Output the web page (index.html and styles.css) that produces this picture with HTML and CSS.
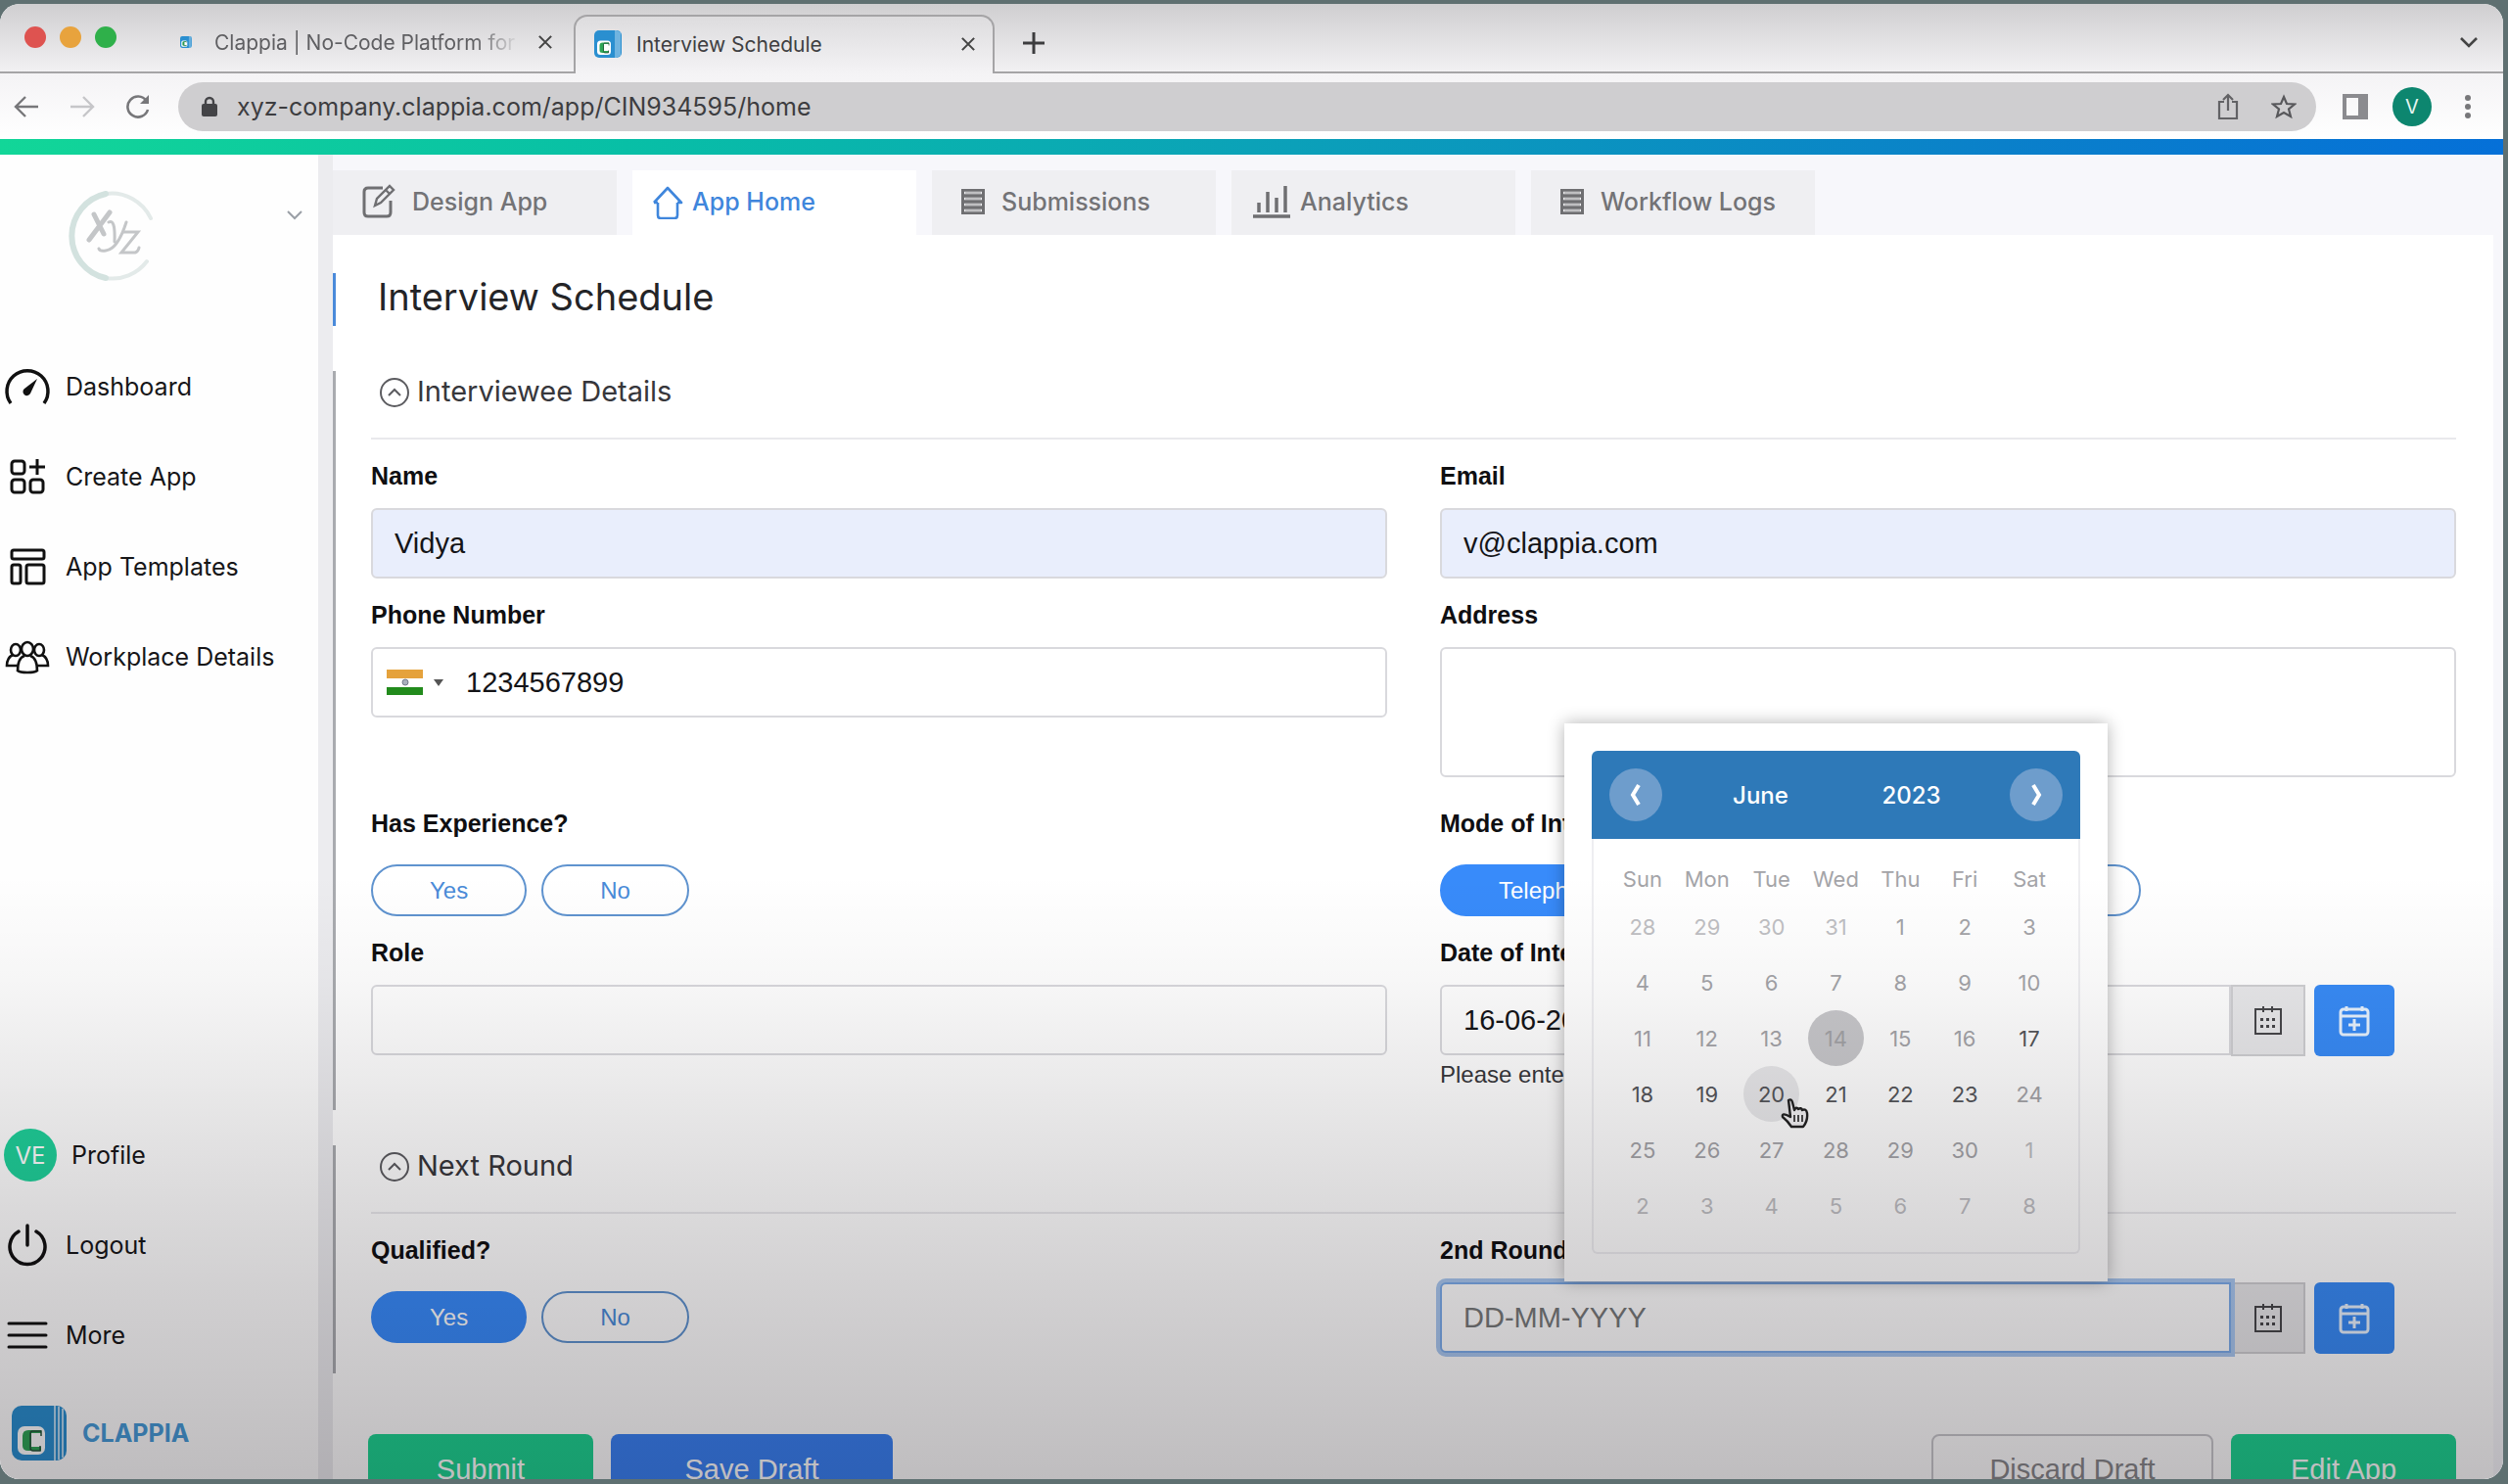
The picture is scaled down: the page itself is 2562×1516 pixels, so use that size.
FILE: index.html
```html
<!DOCTYPE html>
<html lang="en">
<head>
<meta charset="utf-8">
<title>Interview Schedule</title>
<link rel="stylesheet" href="styles.css">
</head>
<body>
<svg class="sprite" aria-hidden="true">
  <symbol id="clappia" viewBox="0 0 56 56">
    <rect x="0" y="0" width="56" height="56" rx="10" fill="#2a8fd0"/>
    <path d="M44 0v56M48 1v54M52 3v50" stroke="#e4f1fa" stroke-width="1.5"/>
    <rect x="6" y="21" width="28" height="29" rx="7" fill="#fff"/>
    <path d="M30 28V25H17Q11 25 11 31V41Q11 46 17 46H30V42H20V28Z" fill="#2fa556"/>
    <path d="M30 31V26H21Q19 26 19 29V43Q19 46 22 46H29V41" fill="none" stroke="#24543a" stroke-width="1.5"/>
  </symbol>
  <symbol id="close" viewBox="0 0 16 16"><path d="M1 1 15 15M15 1 1 15" stroke="currentColor" stroke-width="2.4" fill="none"/></symbol>
  <symbol id="list" viewBox="0 0 24 26">
    <rect width="24" height="26" fill="#6f6f72"/>
    <path d="M3 4H21M3 10H21M3 16H21M3 22H21" stroke="#efeff2" stroke-width="2.4"/>
    <path d="M4 4H20M4 10H20M4 16H20M4 22H20" stroke="#8e8e90" stroke-width="1"/>
  </symbol>
  <symbol id="collapse" viewBox="0 0 32 32"><g fill="none" stroke="#5c5c60" stroke-width="2"><circle cx="16" cy="17" r="14"/><path d="M10 20 16 14 22 20"/></g></symbol>
  <symbol id="calendar" viewBox="0 0 32 32">
    <path d="M3 4H29V29H3ZM11 1V7M20 1V7" fill="none" stroke="#47474a" stroke-width="2"/>
    <path d="M8 13h3v3H8zM14 13h3v3h-3zM20 13h3v3h-3zM8 20h3v3H8zM14 20h3v3h-3zM20 20h3v3h-3z" fill="#47474a"/>
  </symbol>
  <symbol id="calendar-add" viewBox="0 0 32 32">
    <g fill="none" stroke="#e8f3ff" stroke-width="3"><rect x="2" y="4" width="28" height="26" rx="3"/><path d="M2 11H30M8 1V6M24 1V6M16 14V26M10 20H22"/></g>
  </symbol>
</svg>

<div class="window">
  <header class="tabstrip">
    <div class="lights"><i class="light red"></i><i class="light amber"></i><i class="light green"></i></div>
    <div class="browser-tab">
      <svg class="favicon-small"><use href="#clappia"/></svg>
      <span class="tab-title faded">Clappia | No-Code Platform for</span>
      <button class="icon-button" aria-label="Close tab"><svg class="x"><use href="#close"/></svg></button>
    </div>
    <div class="browser-tab current">
      <svg class="favicon"><use href="#clappia"/></svg>
      <span class="tab-title">Interview Schedule</span>
      <button class="icon-button" aria-label="Close tab"><svg class="x"><use href="#close"/></svg></button>
    </div>
    <button class="icon-button new-tab" aria-label="New tab"><svg width="24" height="24" viewBox="0 0 24 24"><path d="M12 1V23M1 12H23" stroke="#3c3c3e" stroke-width="3"/></svg></button>
    <button class="icon-button tab-menu" aria-label="Search tabs"><svg width="18" height="12" viewBox="0 0 18 12"><path d="M1 2 9 10 17 2" fill="none" stroke="#444" stroke-width="2.6"/></svg></button>
  </header>

  <div class="toolbar">
    <button class="icon-button" aria-label="Back"><svg width="26" height="24" viewBox="0 0 26 24"><path d="M25 12H3M12 2 2 12 12 22" fill="none" stroke="#77777a" stroke-width="2.4"/></svg></button>
    <button class="icon-button" aria-label="Forward"><svg width="26" height="24" viewBox="0 0 26 24"><path d="M1 12H23M14 2 24 12 14 22" fill="none" stroke="#c6c6c9" stroke-width="2.4"/></svg></button>
    <button class="icon-button" aria-label="Reload"><svg width="26" height="26" viewBox="0 0 26 26"><path d="M23 16A10.500 10.500 0 1 1 21.500 7" fill="none" stroke="#77777a" stroke-width="2.6"/><path d="M24 1V10H15Z" fill="#77777a"/></svg></button>
    <div class="address">
      <svg width="16" height="22" viewBox="0 0 16 22"><rect y="8" width="16" height="13" rx="2" fill="#444447"/><path d="M4 9V6A4 4 0 0 1 12 6V9" fill="none" stroke="#444447" stroke-width="2.4"/></svg>
      <input class="url" aria-label="Address" value="xyz-company.clappia.com/app/CIN934595/home">
      <button class="icon-button" aria-label="Share"><svg width="22" height="28" viewBox="0 0 22 28"><path d="M7 9H2V26H20V9H15M11 18V3M6 7 11 2 16 7" fill="none" stroke="#626265" stroke-width="2.2"/></svg></button>
      <button class="icon-button" aria-label="Bookmark"><svg width="26" height="26" viewBox="0 0 26 26"><path d="M13 3 16 10 24 10.500 18 15.500 20 23 13 19 6 23 8 15.500 2 10.500 10 10Z" fill="none" stroke="#58585b" stroke-width="2.2"/></svg></button>
    </div>
    <button class="icon-button" aria-label="Side panel"><svg width="26" height="26" viewBox="0 0 26 26"><path d="M0 0H26V26H0ZM4 4V22H16V4Z" fill="#8b8b8f" fill-rule="evenodd"/></svg></button>
    <button class="user-badge" aria-label="Account">V</button>
    <button class="icon-button" aria-label="Menu"><svg width="6" height="26" viewBox="0 0 6 26"><g fill="#77777a"><circle cx="3" cy="4" r="3"/><circle cx="3" cy="13" r="3"/><circle cx="3" cy="22" r="3"/></g></svg></button>
  </div>

  <div class="brand-line"></div>

  <div class="app">
    <aside class="sidebar">
      <div class="workspace">
        <svg class="workspace-logo" viewBox="0 0 100 96">
          <path d="M86 30A44 44 0 0 0 40 5M40 91A44 44 0 0 0 82 74" fill="none" stroke="#e3eae9" stroke-width="4" stroke-linecap="round"/>
          <path d="M40 5A44 44 0 0 0 40 91" fill="none" stroke="#d3e2df" stroke-width="6" stroke-linecap="round"/>
          <g fill="none" stroke="#c4c6c8" stroke-linecap="round"><path d="M28 26 38 46M44 24 23 52" stroke-width="5"/><path d="M43 34Q50 30 49 54M61 34Q52 62 40 63 34 64 33 61" stroke-width="3"/><path d="M58 44H73L56 65H70Q73 64 74 60" stroke-width="3"/></g>
        </svg>
        <button class="icon-button" aria-label="Switch workspace"><svg width="16" height="10" viewBox="0 0 16 10"><path d="M1 1 8 8 15 1" fill="none" stroke="#9a9fa6" stroke-width="2"/></svg></button>
      </div>
      <nav class="menu">
        <a href="#" class="menu-item">
          <svg viewBox="0 0 48 48"><path d="M7 41A21 21 0 1 1 41 41" fill="none" stroke="#111" stroke-width="3.500"/><path d="M34 16 27 31A4 4 0 1 1 21 26Z" fill="#111"/></svg>
          Dashboard</a>
        <a href="#" class="menu-item">
          <svg viewBox="0 0 48 48"><g fill="none" stroke="#111" stroke-width="3"><rect x="8" y="8" width="13" height="13" rx="3"/><rect x="8" y="27" width="13" height="13" rx="3"/><rect x="27" y="27" width="13" height="13" rx="3"/><path d="M34 6V22M26 14H42"/></g></svg>
          Create App</a>
        <a href="#" class="menu-item">
          <svg viewBox="0 0 48 48"><g fill="none" stroke="#111" stroke-width="3"><rect x="8" y="7" width="33" height="9" rx="2"/><rect x="8" y="22" width="9" height="19" rx="2"/><rect x="23" y="22" width="18" height="19" rx="2"/></g></svg>
          App Templates</a>
        <a href="#" class="menu-item">
          <svg viewBox="0 0 48 48"><g fill="none" stroke="#111" stroke-width="2.600"><ellipse cx="24" cy="16" rx="6" ry="7"/><path d="M14 39Q14 25 21 23M34 39Q34 25 27 23M14 38Q16 40 24 40 32 40 34 38"/><ellipse cx="12" cy="17" rx="5" ry="6"/><ellipse cx="36" cy="17" rx="5" ry="6"/><path d="M9 22Q3 25 3 33H14M39 22Q45 25 45 33H34"/></g></svg>
          Workplace Details</a>
      </nav>
      <nav class="menu account">
        <a href="#" class="menu-item profile"><span class="initials">VE</span>Profile</a>
        <a href="#" class="menu-item">
          <svg viewBox="0 0 48 48"><path d="M15 10A18 18 0 1 0 33 10M24 4V24" fill="none" stroke="#111" stroke-width="3.500" stroke-linecap="round"/></svg>
          Logout</a>
        <a href="#" class="menu-item">
          <svg viewBox="0 0 48 48"><path d="M5 12H43M5 24H43M5 36H43" stroke="#111" stroke-width="3" stroke-linecap="round"/></svg>
          More</a>
      </nav>
      <a href="#" class="product"><svg width="56" height="56"><use href="#clappia"/></svg>CLAPPIA</a>
    </aside>

    <main class="main">
      <nav class="app-tabs">
        <a href="#" class="app-tab spaced"><svg width="34" height="36" viewBox="0 0 34 36"><path d="M21 4H6Q2 4 2 8V29Q2 33 6 33H25Q29 33 29 29V17" fill="none" stroke="#6f6f72" stroke-width="3"/><path d="M13 22 15 15 28 2 32 6 19 19ZM24 6 28 10" fill="none" stroke="#6f6f72" stroke-width="2.400"/></svg>Design App</a>
        <a href="#" class="app-tab selected"><svg width="32" height="36" viewBox="0 0 32 36"><path d="M2 19 16 4 30 19H26M6 19H2M6 19V32Q6 35 9 35H23Q26 35 26 32V19" fill="none" stroke="#3f86dc" stroke-width="2.600" stroke-linejoin="round"/></svg>App Home</a>
        <a href="#" class="app-tab spaced"><svg width="24" height="26"><use href="#list"/></svg>Submissions</a>
        <a href="#" class="app-tab"><svg width="38" height="34" viewBox="0 0 38 34"><path d="M0 32H38M6 28V18M15 28V7M24 28V13M33 28V1" stroke="#6f6f72" stroke-width="3.500"/></svg>Analytics</a>
        <a href="#" class="app-tab spaced"><svg width="24" height="26"><use href="#list"/></svg>Workflow Logs</a>
      </nav>

      <form class="sheet">
        <h1 class="sheet-title">Interview Schedule</h1>

        <section class="section">
          <h2 class="section-title"><svg><use href="#collapse"/></svg>Interviewee Details</h2>
          <div class="fields">
            <div class="field">
              <label for="name">Name</label>
              <input class="box filled" id="name" value="Vidya">
            </div>
            <div class="field">
              <label for="email">Email</label>
              <input class="box filled" id="email" value="v@clappia.com">
            </div>
            <div class="field">
              <label for="phone">Phone Number</label>
              <div class="box phone">
                <button type="button" class="country" aria-label="Country: India">
                  <svg width="37" height="26" viewBox="0 0 37 26"><path fill="#e5a23c" d="M0 0h37v9H0z"/><path fill="#fff" d="M0 9h37v9H0z"/><path fill="#228b1c" d="M0 18h37v8H0z"/><circle cx="19" cy="13" r="3" fill="#a9b0bd" stroke="#73798a"/></svg>
                  <svg width="10" height="7" viewBox="0 0 10 7"><path d="M0 0H10L5 7Z" fill="#555"/></svg>
                </button>
                <input class="bare" id="phone" type="tel" value="1234567899">
              </div>
            </div>
            <div class="field">
              <label for="address">Address</label>
              <textarea class="box tall" id="address"></textarea>
            </div>
            <div class="field">
              <span class="label">Has Experience?</span>
              <div class="choices">
                <button type="button" class="pill">Yes</button>
                <button type="button" class="pill">No</button>
              </div>
            </div>
            <div class="field">
              <span class="label">Mode of Interview</span>
              <div class="choices">
                <button type="button" class="pill on">Telephonic</button>
                <button type="button" class="pill">In Person</button>
                <button type="button" class="pill">Video Call</button>
              </div>
            </div>
            <div class="field">
              <label for="role">Role</label>
              <input class="box" id="role">
            </div>
            <div class="field">
              <label for="date1">Date of Interview</label>
              <div class="date">
                <input class="box" id="date1" value="16-06-2023">
                <button type="button" class="addon" aria-label="Open calendar"><svg width="32" height="32"><use href="#calendar"/></svg></button>
                <button type="button" class="add-event" aria-label="Add to calendar"><svg width="32" height="32"><use href="#calendar-add"/></svg></button>
              </div>
              <p class="hint">Please enter the date</p>
            </div>
          </div>
        </section>

        <section class="section">
          <h2 class="section-title"><svg><use href="#collapse"/></svg>Next Round</h2>
          <div class="fields">
            <div class="field">
              <span class="label">Qualified?</span>
              <div class="choices">
                <button type="button" class="pill on">Yes</button>
                <button type="button" class="pill">No</button>
              </div>
            </div>
            <div class="field">
              <label for="date2">2nd Round Date</label>
              <div class="date">
                <input class="box focused" id="date2" placeholder="DD-MM-YYYY">
                <button type="button" class="addon" aria-label="Open calendar"><svg width="32" height="32"><use href="#calendar"/></svg></button>
                <button type="button" class="add-event" aria-label="Add to calendar"><svg width="32" height="32"><use href="#calendar-add"/></svg></button>

                <div class="picker">
                  <div class="picker-head">
                    <button type="button" class="step" aria-label="Previous month"><svg width="14" height="26" viewBox="0 0 14 26"><path d="M10 3 4 13 10 23" fill="none" stroke="#fff" stroke-width="4"/></svg></button>
                    <button type="button" class="period">June</button>
                    <button type="button" class="period">2023</button>
                    <button type="button" class="step next" aria-label="Next month"><svg width="14" height="26" viewBox="0 0 14 26"><path d="M4 3 10 13 4 23" fill="none" stroke="#fff" stroke-width="4"/></svg></button>
                  </div>
                  <div class="picker-body">
                    <table class="days">
                      <thead><tr><th>Sun</th><th>Mon</th><th>Tue</th><th>Wed</th><th>Thu</th><th>Fri</th><th>Sat</th></tr></thead>
                      <tbody>
                        <tr><td class="out">28</td><td class="out">29</td><td class="out">30</td><td class="out">31</td><td>1</td><td>2</td><td>3</td></tr>
                        <tr><td>4</td><td>5</td><td>6</td><td>7</td><td>8</td><td>9</td><td>10</td></tr>
                        <tr><td>11</td><td>12</td><td>13</td><td><span class="day today">14</span></td><td>15</td><td>16</td><td><button type="button" class="day">17</button></td></tr>
                        <tr><td><button type="button" class="day">18</button></td><td><button type="button" class="day">19</button></td><td class="pointed"><button type="button" class="day hover">20</button><svg class="cursor" viewBox="0 0 30 32"><path d="M9 3Q12 1 13 5L15 13Q17 9 19 12 22 10 23 13 27 11 28 16 29 24 24 30H12Q8 24 3 20 2 16 7 18L11 20Z" fill="#f4f3f5" stroke="#222" stroke-width="2.400" stroke-linejoin="round"/><path d="M15 18V25M19 18V25M23 18V25" stroke="#222" stroke-width="1.600"/></svg></td><td><button type="button" class="day">21</button></td><td><button type="button" class="day">22</button></td><td><button type="button" class="day">23</button></td><td>24</td></tr>
                        <tr><td>25</td><td>26</td><td>27</td><td>28</td><td>29</td><td>30</td><td class="out">1</td></tr>
                        <tr><td class="out">2</td><td class="out">3</td><td class="out">4</td><td class="out">5</td><td class="out">6</td><td class="out">7</td><td class="out">8</td></tr>
                      </tbody>
                    </table>
                  </div>
                </div>
              </div>
            </div>
          </div>
        </section>

        <div class="actions">
          <button type="button" class="action success">Submit</button>
          <button type="button" class="action primary">Save Draft</button>
          <button type="button" class="action plain">Discard Draft</button>
          <button type="button" class="action success">Edit App</button>
        </div>
      </form>
    </main>
  </div>
</div>
</body>
</html>
```
FILE: styles.css
```css
* { box-sizing: border-box; }

html, body { height: 100%; margin: 0; }

body {
  padding: 4px 5px 5px 0;
  overflow: hidden;
  background: #5f7071;
  color: #1d1d20;
  font-family: Inter, "Liberation Sans", sans-serif;
}

button, input, textarea { font: inherit; color: inherit; margin: 0; }
button { border: 0; padding: 0; background: none; cursor: pointer; }
a { color: inherit; text-decoration: none; }
svg { display: block; flex: none; }
.sprite { position: absolute; width: 0; height: 0; }

.window {
  position: relative;
  display: flex;
  flex-direction: column;
  height: 100%;
  overflow: hidden;
  border-radius: 20px;
  background: #fff;
}

/* Dimming toward the lower edge of the window */
.window::after {
  content: "";
  position: absolute;
  inset: 0;
  z-index: 10;
  pointer-events: none;
  background: linear-gradient(rgba(8, 0, 8, 0) 59%, rgba(8, 0, 8, .03) 66%, rgba(8, 0, 8, .09) 74%, rgba(8, 0, 8, .15) 82%, rgba(8, 0, 8, .19) 88%, rgba(8, 0, 8, .26) 100%);
}

.icon-button { display: flex; align-items: center; justify-content: center; min-width: 26px; }

/* Browser tabs */
.tabstrip {
  display: flex;
  align-items: flex-end;
  height: 71px;
  flex: none;
  border-bottom: 2px solid #a5a4a6;
  background: linear-gradient(#cfced0, #f2f1f3);
}
.lights { display: flex; gap: 14px; padding-left: 25px; width: 172px; height: 70px; align-items: center; }
.light { width: 22px; height: 22px; border-radius: 50%; }
.red { background: #de5350; }
.amber { background: #e8a33d; }
.green { background: #2fb04a; }
.browser-tab {
  display: flex;
  align-items: center;
  width: 414px;
  height: 60px;
  padding: 0 16px 0 12px;
  color: #5f5f62;
  font-size: 21px;
}
.browser-tab .icon-button { margin-left: auto; color: #444; }
.browser-tab .x { width: 14px; height: 14px; }
.favicon-small { width: 12px; height: 14px; margin-right: 23px; }
.favicon { width: 28px; height: 30px; margin-right: 15px; }
.tab-title { white-space: nowrap; overflow: hidden; }
.faded { width: 312px; mask-image: linear-gradient(90deg, #000 85%, transparent); }
.current {
  position: relative;
  width: 430px;
  margin-bottom: -2px;
  padding: 0 12px 2px 19px;
  border: 2px solid #a5a4a6;
  border-bottom: 0;
  border-radius: 14px 14px 0 0;
  background: linear-gradient(#dddcde, #f4f3f5);
  color: #3f3f42;
}
.new-tab { width: 80px; height: 58px; }
.tab-menu { height: 60px; margin: 0 22px 0 auto; }

/* Address bar */
.toolbar {
  display: flex;
  align-items: center;
  gap: 31px;
  height: 67px;
  flex: none;
  padding: 0 33px 0 14px;
  background: linear-gradient(#f4f3f5, #fff);
}
.toolbar > .icon-button:last-child { min-width: 6px; }
.address {
  display: flex;
  flex: 1;
  align-items: center;
  gap: 31px;
  height: 50px;
  margin: 0 -4px 0 -3px;
  padding: 0 20px 0 24px;
  border-radius: 25px;
  background: #cfced0;
}
.url {
  flex: 1;
  margin-left: -11px;
  padding: 0;
  border: 0;
  outline: 0;
  background: none;
  color: #3d3d40;
  font-size: 25px;
}
.user-badge {
  width: 40px;
  height: 40px;
  margin: 0 3px 0 -6px;
  border-radius: 50%;
  background: #0d866f;
  color: #e6f5f1;
  font-size: 20px;
}
.brand-line { height: 16px; flex: none; background: linear-gradient(90deg, #12d698, #08bfa6 25%, #0ba2b8 50%, #0a80ca 80%, #0570d8); }

/* App shell */
.app { display: flex; flex: 1; min-height: 0; background: #f7f7fb; }
.sidebar { display: flex; flex-direction: column; width: 325px; flex: none; padding-bottom: 19px; background: #fefefe; }
.workspace { display: flex; align-items: flex-start; justify-content: space-between; height: 191px; flex: none; padding: 35px 11px 0 68px; }
.workspace-logo { width: 100px; height: 96px; }
.workspace .icon-button { height: 54px; }
.menu-item { display: flex; align-items: center; gap: 15px; height: 92px; padding-left: 4px; color: #161618; font-size: 25px; }
.menu-item svg { width: 48px; height: 48px; }
.account { margin-top: auto; }
.initials {
  display: flex;
  align-items: center;
  justify-content: center;
  width: 54px;
  height: 54px;
  border-radius: 50%;
  background: #1fd19a;
  color: #fff;
  font-size: 24px;
}
.product { display: flex; align-items: center; gap: 16px; margin: 26px 0 0 12px; color: #469bd8; font-size: 25px; font-weight: 700; }

.main { flex: 1; min-width: 0; padding-right: 10px; border-left: 15px solid #ececef; }
.app-tabs { display: flex; gap: 16px; height: 82px; padding-top: 16px; }
.app-tab {
  display: flex;
  align-items: center;
  gap: 10px;
  width: 290px;
  padding: 0 0 2px 22px;
  background: #efeff2;
  color: #737376;
  font-size: 25px;
  font-weight: 500;
}
.spaced { gap: 17px; padding-left: 30px; }
.selected { gap: 9px; padding-left: 20px; background: #fff; color: #3f86dc; }

/* Form sheet */
.sheet { min-height: 100%; padding: 39px 38px 0 0; background: #fff; color: #0f0f12; }
.sheet-title {
  margin: 0 0 46px;
  padding: 0 0 6px 43px;
  border-left: 3px solid #4a8ada;
  color: #242427;
  font-size: 38px;
  font-weight: 400;
  line-height: 48px;
}
.section { margin-bottom: 36px; padding: 0 0 20px 36px; border-left: 3px solid #a9abaf; }
.section-title {
  display: flex;
  align-items: center;
  gap: 7px;
  margin: 0 0 19px;
  padding: 0 0 26px 8px;
  border-bottom: 2px solid #e9e9ec;
  color: #37373b;
  font-size: 29px;
  font-weight: 400;
  line-height: 42px;
}
.section-title svg { width: 32px; height: 32px; }
.fields { display: grid; grid-template-columns: 1fr 1fr; gap: 19px 54px; font-family: "Liberation Sans", Arial, sans-serif; }
.field label, .label { display: block; margin-bottom: 15px; font-size: 25px; font-weight: 700; line-height: 36px; }
.box {
  display: block;
  width: 100%;
  height: 72px;
  padding: 0 22px;
  border: 2px solid #d9d9dd;
  border-radius: 6px;
  outline: 0;
  background: #fff;
  color: #141417;
  font-size: 29px;
}
.filled { background: #e9eefc; }
.tall { height: 133px; margin-bottom: 10px; resize: none; }
.phone { display: flex; padding: 0 14px; }
.country { display: flex; align-items: center; gap: 11px; }
.bare { flex: 1; min-width: 0; padding: 0 0 0 23px; border: 0; outline: 0; background: none; }
.choices { display: flex; gap: 15px; padding-top: 9px; }
.pill {
  height: 53px;
  padding: 0 58px;
  border: 2px solid #5f93cf;
  border-radius: 27px;
  background: #fff;
  color: #4a8bd8;
  font-size: 24px;
}
.pill.on { border-color: #388bfa; background: #388bfa; color: #fff; }

.date { position: relative; display: flex; margin-right: 63px; }
.date .box { flex: 1; min-width: 0; border-radius: 6px 0 0 6px; }
.addon {
  display: flex;
  align-items: center;
  justify-content: center;
  width: 76px;
  height: 73px;
  border: 2px solid #cfcfd2;
  background: #e8e8ea;
}
.add-event {
  display: flex;
  align-items: center;
  justify-content: center;
  width: 82px;
  height: 73px;
  margin-left: 9px;
  border-radius: 6px;
  background: #388bf6;
}
.date .focused { position: relative; border-color: #7cacea; box-shadow: 0 0 0 4px #a9c8f0; }
.focused::placeholder { color: #777a7a; opacity: 1; }
.hint { margin: 3px 0 0; color: #37373b; font-size: 24px; line-height: 32px; }

/* Date picker */
.picker {
  position: absolute;
  left: 127px;
  bottom: calc(100% + 1px);
  z-index: 2;
  width: 555px;
  padding: 28px;
  background: #fff;
  box-shadow: 0 0 16px rgba(0, 0, 0, .3);
  font-family: Inter, "Liberation Sans", sans-serif;
}
.picker-head {
  display: grid;
  grid-template-columns: 1fr 154px 154px 1fr;
  align-items: center;
  height: 90px;
  padding: 0 18px;
  border-radius: 6px 6px 0 0;
  background: #2e79b8;
  color: #fff;
}
.period { font-size: 24px; font-weight: 500; }
.step { display: flex; align-items: center; justify-content: center; width: 54px; height: 54px; border-radius: 50%; background: #6e9dcc; }
.next { justify-self: end; }
.picker-body { padding: 20px 17px 19px; border: 2px solid #eeeef1; border-top: 0; border-radius: 0 0 6px 6px; }
.days { width: 100%; table-layout: fixed; border-collapse: collapse; color: #a4a4a8; font-size: 22px; text-align: center; }
.days th { height: 41px; padding: 0; font-weight: 400; }
.days td { height: 57px; padding: 0; }
.days .out { color: #bfbfc3; }
.day { display: inline-flex; align-items: center; justify-content: center; width: 57px; height: 57px; border-radius: 50%; color: #55565a; vertical-align: top; }
.today { background: #c8c8cb; color: #a3a3a6; }
.hover { background: #e9e9eb; }
.pointed { position: relative; }
.cursor { position: absolute; left: 41px; top: 32px; width: 30px; height: 32px; }

/* Footer actions */
.actions { display: flex; gap: 18px; padding: 26px 0 0 36px; font-family: "Liberation Sans", Arial, sans-serif; }
.action { width: 230px; height: 73px; border-radius: 8px; color: #fff; font-size: 29px; }
.success { background: #1ed492; }
.primary { width: 288px; background: #3a82f4; }
.plain { width: 288px; margin-left: auto; border: 2px solid #c9c9cd; color: #88888b; }
```
